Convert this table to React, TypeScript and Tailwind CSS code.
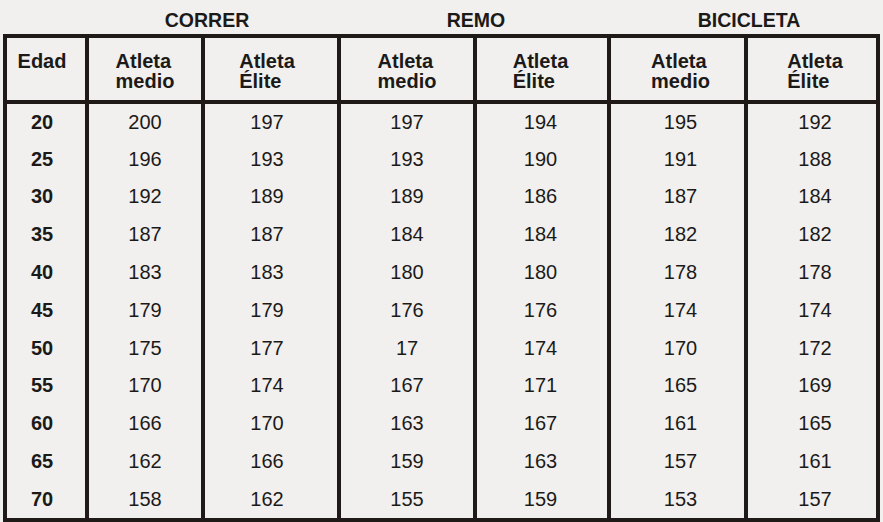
const rows: [number, number, number, number, number, number, number][] = [
  [20, 200, 197, 197, 194, 195, 192],
  [25, 196, 193, 193, 190, 191, 188],
  [30, 192, 189, 189, 186, 187, 184],
  [35, 187, 187, 184, 184, 182, 182],
  [40, 183, 183, 180, 180, 178, 178],
  [45, 179, 179, 176, 176, 174, 174],
  [50, 175, 177, 17, 174, 170, 172],
  [55, 170, 174, 167, 171, 165, 169],
  [60, 166, 170, 163, 167, 161, 165],
  [65, 162, 166, 159, 163, 157, 161],
  [70, 158, 162, 155, 159, 153, 157],
];

// small per-column nudges so the figures sit where the print has them
const nudge = ["pr-[8px]", "", "pr-[8px]", "", "pr-[3px]", "pl-[6px]", "pl-[6px]"];

const cell = "border-4 border-[#1f1a18]";

function HeadCell({ top, bottom, col }: { top: string; bottom: string; col: number }) {
  return (
    <th className={`${cell} align-top pt-[13px] font-bold ${nudge[col]}`}>
      <span className="inline-block text-left leading-[20px]">
        {top}
        <br />
        {bottom}
      </span>
    </th>
  );
}

export default function App() {
  return (
    <div
      className="w-[883px] h-[522px] bg-[#f1f0ee] text-[#1c1a19] overflow-hidden"
      style={{ fontFamily: '"Liberation Sans", Arial, sans-serif' }}
    >
      {/* Group headings */}
      <div className="flex h-[34px] pt-[11px] text-[19.5px] leading-[19px] font-bold">
        <div className="w-[87px]" />
        <div className="w-[240px] text-center">CORRER</div>
        <div className="w-[298px] text-center">REMO</div>
        <div className="w-[248px] text-center">BICICLETA</div>
      </div>

      <table className="ml-[3px] w-[877px] table-fixed border-collapse text-[20px]">
        <colgroup>
          <col className="w-[82px]" />
          <col className="w-[116px]" />
          <col className="w-[136px]" />
          <col className="w-[136px]" />
          <col className="w-[134px]" />
          <col className="w-[137px]" />
          <col className="w-[132px]" />
        </colgroup>
        <thead>
          <tr className="h-[66px]">
            <th className={`${cell} align-top pt-[13px] font-bold leading-[20px] ${nudge[0]}`}>Edad</th>
            <HeadCell top="Atleta" bottom="medio" col={1} />
            <HeadCell top="Atleta" bottom="Élite" col={2} />
            <HeadCell top="Atleta" bottom="medio" col={3} />
            <HeadCell top="Atleta" bottom="Élite" col={4} />
            <HeadCell top="Atleta" bottom="medio" col={5} />
            <HeadCell top="Atleta" bottom="Élite" col={6} />
          </tr>
        </thead>
        <tbody>
          {rows.map((r) => (
            <tr key={r[0]} className="h-[37.8px]">
              {r.map((v, i) => (
                <td
                  key={i}
                  className={`border-x-4 border-[#1f1a18] text-center align-middle py-0 leading-[20px] ${nudge[i]} ${
                    i === 0 ? "font-bold" : ""
                  }`}
                >
                  {v}
                </td>
              ))}
            </tr>
          ))}
          <tr className="h-0">
            {nudge.map((_, i) => (
              <td key={i} className="border-b-4 border-x-4 border-[#1f1a18] p-0 h-0" />
            ))}
          </tr>
        </tbody>
      </table>
    </div>
  );
}
